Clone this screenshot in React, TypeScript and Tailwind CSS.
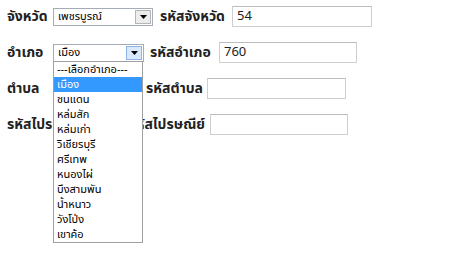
const amphoes = [
  "---เลือกอำเภอ---",
  "เมือง",
  "ชนแดน",
  "หล่มสัก",
  "หล่มเก่า",
  "วิเชียรบุรี",
  "ศรีเทพ",
  "หนองไผ่",
  "บึงสามพัน",
  "น้ำหนาว",
  "วังโป่ง",
  "เขาค้อ",
];

const Arrow = ({ open }: { open?: boolean }) => (
  <div
    className={
      "flex h-full w-[16px] items-center justify-center border " +
      (open ? "border-[#8eb4e3] bg-[#d9e8fb]" : "border-[#b5b5b5] bg-[#ececec]")
    }
  >
    <svg width="7" height="4" viewBox="0 0 7 4">
      <path d="M0 0h7L3.5 4z" fill="#000" />
    </svg>
  </div>
);

const Select = ({ value, width, open }: { value: string; width: string; open?: boolean }) => (
  <div className={"flex h-[18px] items-stretch border border-[#a5acb5] bg-white p-px font-normal " + width}>
    <span className="flex-1 pl-[3px] text-[11px] leading-[14px] text-black">{value}</span>
    <Arrow open={open} />
  </div>
);

const TextBox = ({ value, width }: { value?: string; width: string }) => (
  <div
    className={
      "h-[21px] border border-[#cfcfcf] border-t-[#bdbdbd] bg-white pl-[4px] text-[13px] font-normal leading-[19px] text-[#222] " +
      width
    }
  >
    {value}
  </div>
);

export default function App() {
  return (
    <div
      className="relative h-[270px] w-[474px] bg-white text-[14px] font-bold text-[#222]"
      style={{ fontFamily: "Tahoma, 'Noto Sans Thai', 'Noto Sans', sans-serif" }}
    >
      <div className="flex flex-col gap-[15px] pl-[7px] pt-[6px]">
        <div className="flex h-[21px] items-center">
          <span className="w-[46px]">จังหวัด</span>
          <Select value="เพชรบูรณ์" width="w-[100px]" />
          <span className="ml-[7px] w-[72px]">รหัสจังหวัด</span>
          <TextBox value="54" width="w-[140px]" />
        </div>
        <div className="flex h-[21px] items-center">
          <span className="w-[46px]">อำเภอ</span>
          <Select value="เมือง" width="w-[91px]" open />
          <span className="ml-[6px] w-[69px]">รหัสอำเภอ</span>
          <TextBox value="760" width="w-[138px]" />
        </div>
        <div className="flex h-[21px] items-center">
          <span className="w-[46px]">ตำบล</span>
          <Select value="" width="w-[80px]" />
          <span className="ml-[10px] w-[64px] pr-[4px] text-right">รหัสตำบล</span>
          <TextBox width="w-[139px]" />
        </div>
        <div className="flex h-[21px] items-center">
          <span className="w-[46px] overflow-hidden whitespace-nowrap">รหัสไปรษณีย์</span>
          <div className="ml-[90px] flex w-[67px] justify-end overflow-hidden whitespace-nowrap pr-[5px]">
            <span className="shrink-0">รหัสไปรษณีย์</span>
          </div>
          <TextBox width="w-[138px]" />
        </div>
      </div>

      <ul className="absolute left-[53px] top-[61px] w-[90px] border border-[#a0a0a0] bg-white text-[11px] font-normal leading-[15px] text-black">
        {amphoes.map((a, i) => (
          <li
            key={a}
            className={"h-[15px] whitespace-nowrap pl-[3px] " + (i === 1 ? "bg-[#3399ff] text-white" : "")}
          >
            {a}
          </li>
        ))}
      </ul>
    </div>
  );
}
